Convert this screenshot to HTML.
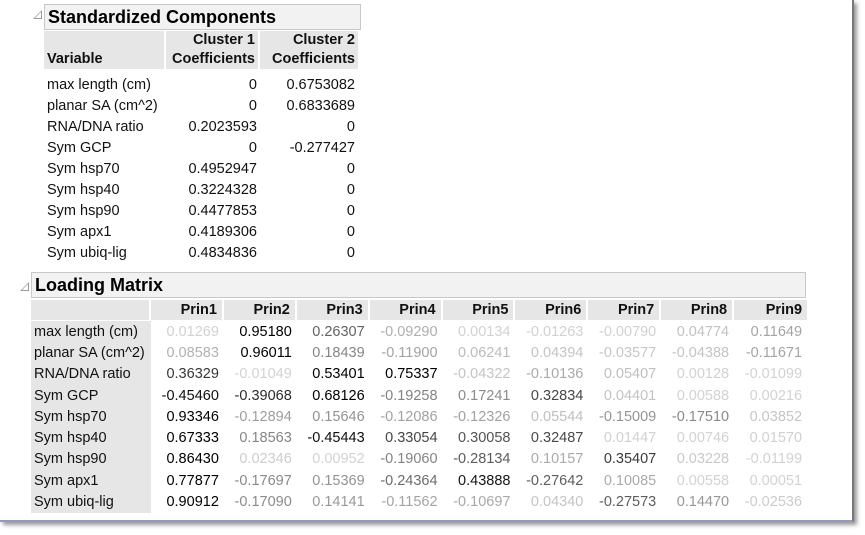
<!DOCTYPE html>
<html><head><meta charset="utf-8"><style>
body{margin:0;width:865px;height:535px;background:#fff;font-family:"Liberation Sans",sans-serif;font-size:14.5px;color:#111;overflow:hidden;position:relative}
.frame{position:absolute;left:0;top:0;width:852px;height:520px;border-right:2px solid #777;border-bottom:2px solid #8e9ac0;box-shadow:3px 3px 4px #999;background:#fff}
.hdr{position:absolute;height:24px;border:1px solid #c8c8c8;background:#f2f2f2;font-weight:bold;font-size:18px;line-height:24px;padding-left:3px;color:#000}
.tri{position:absolute;width:0;height:0;border-left:9px solid transparent;border-bottom:9px solid #999}
.tri:after{content:"";position:absolute;left:-7px;top:2px;border-left:6px solid transparent;border-bottom:6px solid #fff}
table{position:absolute;border-collapse:separate;border-spacing:0;table-layout:fixed}
td,th{padding:0 3px;white-space:nowrap;overflow:hidden}
.t1 th{background:#e6e6e6;font-weight:bold;text-align:right;line-height:19px;vertical-align:bottom;border-right:2px solid #fff}
.t1 td{height:21px;text-align:right;padding-right:3px}
.t1 td:first-child{text-align:left}
.t2 th{background:#e6e6e6;font-weight:bold;text-align:right;height:20px;border-right:2px solid #fff;border-bottom:1px solid #fff;padding-right:5px}
.t2 td{height:21.3px;text-align:right;padding-right:5px}
.t2 td.l{background:#e6e6e6;text-align:left;padding-left:3px}
</style></head><body>
<div class="frame"></div>
<div class="tri" style="left:33px;top:10px"></div>
<div class="hdr" style="left:44px;top:4px;width:312px">Standardized Components</div>
<table class="t1" style="left:44px;top:31px;width:314px">
<colgroup><col style="width:122px"><col style="width:94px"><col></colgroup>
<tr><th style="text-align:left;padding-top:19px">Variable</th><th>Cluster 1<br>Coefficients</th><th style="border-right:0">Cluster 2<br>Coefficients</th></tr>
<tr><td style="padding-top:5px">max length (cm)</td><td style="padding-top:5px">0</td><td style="padding-top:5px">0.6753082</td></tr>
<tr><td>planar SA (cm^2)</td><td>0</td><td>0.6833689</td></tr>
<tr><td>RNA/DNA ratio</td><td>0.2023593</td><td>0</td></tr>
<tr><td>Sym GCP</td><td>0</td><td>-0.277427</td></tr>
<tr><td>Sym hsp70</td><td>0.4952947</td><td>0</td></tr>
<tr><td>Sym hsp40</td><td>0.3224328</td><td>0</td></tr>
<tr><td>Sym hsp90</td><td>0.4477853</td><td>0</td></tr>
<tr><td>Sym apx1</td><td>0.4189306</td><td>0</td></tr>
<tr><td>Sym ubiq-lig</td><td>0.4834836</td><td>0</td></tr>
</table>
<div class="tri" style="left:20px;top:282px"></div>
<div class="hdr" style="left:31px;top:272px;width:770px">Loading Matrix</div>
<table class="t2" id="t2" style="left:31px;top:300px;width:776px">
<colgroup><col style="width:120px"><col span="9" style="width:72.9px"></colgroup>
<tr><th></th><th>Prin1</th><th>Prin2</th><th>Prin3</th><th>Prin4</th><th>Prin5</th><th>Prin6</th><th>Prin7</th><th>Prin8</th><th style="border-right:0">Prin9</th></tr>
<tr><td class="l">max length (cm)</td><td>0.01269</td><td>0.95180</td><td>0.26307</td><td>-0.09290</td><td>0.00134</td><td>-0.01263</td><td>-0.00790</td><td>0.04774</td><td>0.11649</td></tr>
<tr><td class="l">planar SA (cm^2)</td><td>0.08583</td><td>0.96011</td><td>0.18439</td><td>-0.11900</td><td>0.06241</td><td>0.04394</td><td>-0.03577</td><td>-0.04388</td><td>-0.11671</td></tr>
<tr><td class="l">RNA/DNA ratio</td><td>0.36329</td><td>-0.01049</td><td>0.53401</td><td>0.75337</td><td>-0.04322</td><td>-0.10136</td><td>0.05407</td><td>0.00128</td><td>-0.01099</td></tr>
<tr><td class="l">Sym GCP</td><td>-0.45460</td><td>-0.39068</td><td>0.68126</td><td>-0.19258</td><td>0.17241</td><td>0.32834</td><td>0.04401</td><td>0.00588</td><td>0.00216</td></tr>
<tr><td class="l">Sym hsp70</td><td>0.93346</td><td>-0.12894</td><td>0.15646</td><td>-0.12086</td><td>-0.12326</td><td>0.05544</td><td>-0.15009</td><td>-0.17510</td><td>0.03852</td></tr>
<tr><td class="l">Sym hsp40</td><td>0.67333</td><td>0.18563</td><td>-0.45443</td><td>0.33054</td><td>0.30058</td><td>0.32487</td><td>0.01447</td><td>0.00746</td><td>0.01570</td></tr>
<tr><td class="l">Sym hsp90</td><td>0.86430</td><td>0.02346</td><td>0.00952</td><td>-0.19060</td><td>-0.28134</td><td>0.10157</td><td>0.35407</td><td>0.03228</td><td>-0.01199</td></tr>
<tr><td class="l">Sym apx1</td><td>0.77877</td><td>-0.17697</td><td>0.15369</td><td>-0.24364</td><td>0.43888</td><td>-0.27642</td><td>0.10085</td><td>0.00558</td><td>0.00051</td></tr>
<tr><td class="l">Sym ubiq-lig</td><td>0.90912</td><td>-0.17090</td><td>0.14141</td><td>-0.11562</td><td>-0.10697</td><td>0.04340</td><td>-0.27573</td><td>0.14470</td><td>-0.02536</td></tr>
</table>
<script>
document.querySelectorAll('#t2 td:not(.l)').forEach(function(c){
var v=Math.abs(parseFloat(c.textContent));var g=Math.round(Math.max(0,Math.min(210,215-v*440)));
c.style.color='rgb('+g+','+g+','+g+')';});
</script>
</body></html>
